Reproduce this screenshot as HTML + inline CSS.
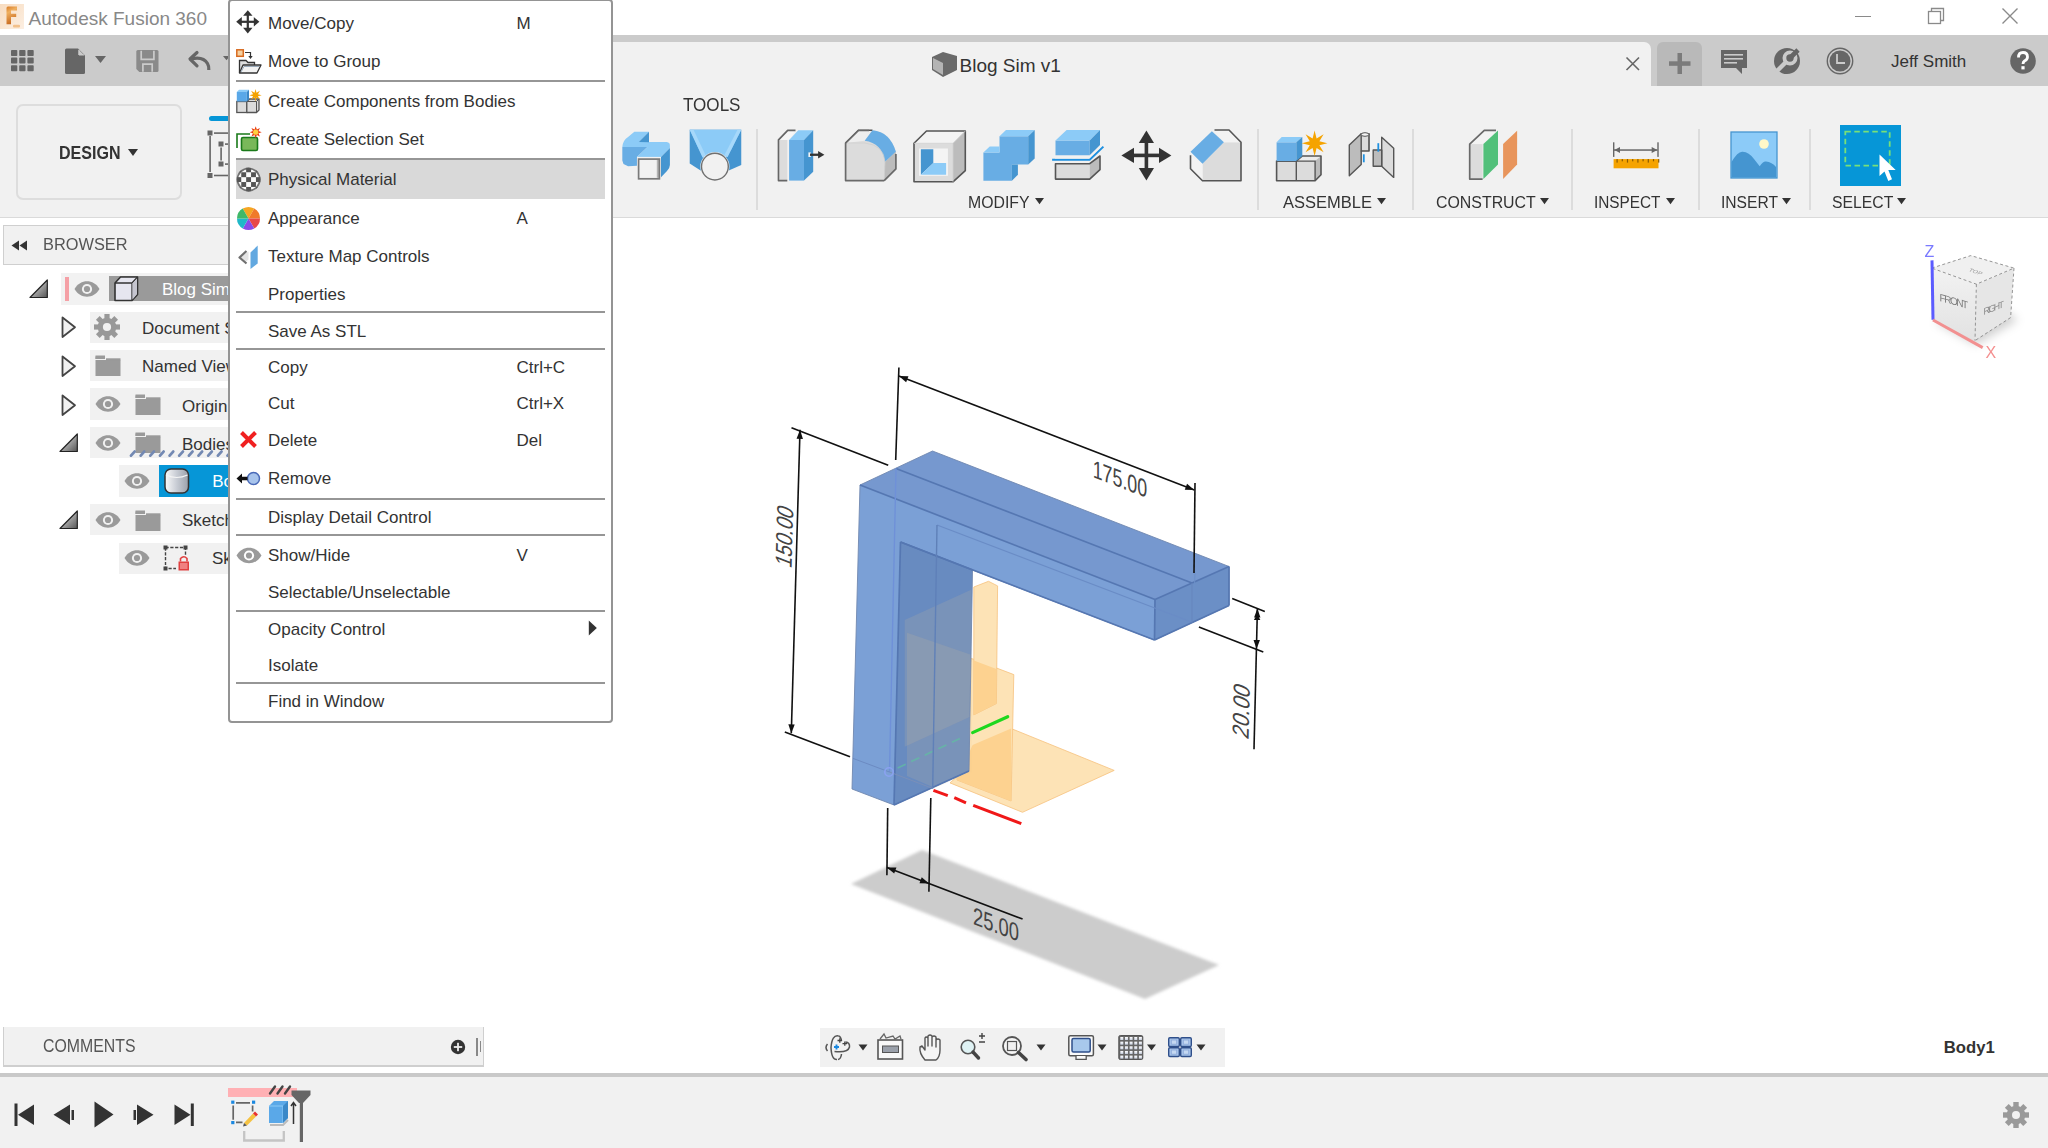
<!DOCTYPE html>
<html><head><meta charset="utf-8"><title>Autodesk Fusion 360</title>
<style>
html,body{margin:0;padding:0;width:2048px;height:1148px;overflow:hidden;background:#fff;position:relative}
body{font-family:"Liberation Sans",sans-serif}
.t{position:absolute;white-space:pre;line-height:1;font-family:"Liberation Sans",sans-serif}
svg{overflow:visible}
</style></head><body>
<div style="position:absolute;left:0px;top:35px;width:2048px;height:51px;background:#cbcbcb"></div>
<div style="position:absolute;left:0px;top:86px;width:2048px;height:131px;background:#f1f1f1"></div>
<div style="position:absolute;left:0px;top:216.5px;width:2048px;height:1.5px;background:#dadada"></div>
<svg style="position:absolute;left:0px;top:4px;" width="25" height="26" viewBox="0 0 25 26"><defs><linearGradient id="lg" x1="0" y1="0" x2="1" y2="1"><stop offset="0" stop-color="#f8dcc0"/><stop offset="1" stop-color="#fcefe2"/></linearGradient><linearGradient id="lf" x1="0" y1="0" x2="0.3" y2="1"><stop offset="0" stop-color="#d77a24"/><stop offset="0.35" stop-color="#f0b060"/><stop offset="1" stop-color="#c86a20"/></linearGradient><filter id="fb"><feGaussianBlur stdDeviation="0.5"/></filter></defs><rect x="0" y="0" width="24" height="25" fill="url(#lg)"/><g filter="url(#fb)"><path d="M6.5 4 Q6.5 2.5 8 2.5 H17 V6.5 H11 V9.8 H16.2 V13 H11 V20.3 H6.5 Z" fill="url(#lf)"/><rect x="13" y="20.8" width="7" height="2.8" rx="1" fill="#f2c08a"/></g></svg>
<div class="t" style="left:28.5px;top:8.92px;font-size:19px;color:#888;font-weight:400;">Autodesk Fusion 360</div>
<div style="position:absolute;left:1855px;top:15.5px;width:16px;height:1.5px;background:#8a8a8a"></div>
<svg style="position:absolute;left:1926px;top:6px;" width="20" height="20" viewBox="0 0 20 20"><rect x="2.5" y="5.5" width="12" height="12" fill="none" stroke="#8a8a8a" stroke-width="1.3"/><path d="M5.5 5.5 V2.5 H17.5 V14.5 H14.5" fill="none" stroke="#8a8a8a" stroke-width="1.3"/></svg>
<svg style="position:absolute;left:2000px;top:6px;" width="20" height="20" viewBox="0 0 20 20"><path d="M2.5 2.5 L17.5 17.5 M17.5 2.5 L2.5 17.5" stroke="#8a8a8a" stroke-width="1.4"/></svg>
<svg style="position:absolute;left:11px;top:50px;" width="24" height="23" viewBox="0 0 24 23"><rect x="0.0" y="0.0" width="6.3" height="6" rx="0.8" fill="#666"/><rect x="8.2" y="0.0" width="6.3" height="6" rx="0.8" fill="#666"/><rect x="16.4" y="0.0" width="6.3" height="6" rx="0.8" fill="#666"/><rect x="0.0" y="7.6" width="6.3" height="6" rx="0.8" fill="#666"/><rect x="8.2" y="7.6" width="6.3" height="6" rx="0.8" fill="#666"/><rect x="16.4" y="7.6" width="6.3" height="6" rx="0.8" fill="#666"/><rect x="0.0" y="15.2" width="6.3" height="6" rx="0.8" fill="#666"/><rect x="8.2" y="15.2" width="6.3" height="6" rx="0.8" fill="#666"/><rect x="16.4" y="15.2" width="6.3" height="6" rx="0.8" fill="#666"/></svg>
<svg style="position:absolute;left:64px;top:48px;" width="22" height="27" viewBox="0 0 22 27"><path d="M1 2 Q1 0.5 2.5 0.5 H14 L21 7.5 V24.5 Q21 26 19.5 26 H2.5 Q1 26 1 24.5 Z" fill="#666"/><path d="M14.5 1.5 L20 7 H14.5 Z" fill="#cbcbcb"/><path d="M15 2 V7 H20" fill="none" stroke="#cbcbcb" stroke-width="1"/></svg>
<svg style="position:absolute;left:95px;top:56px;" width="12" height="8" viewBox="0 0 12 8"><path d="M0 0 H11 L5.5 7 Z" fill="#666"/></svg>
<svg style="position:absolute;left:222.5px;top:56px;" width="8" height="5" viewBox="0 0 8 5"><path d="M0 0 H7 L3.5 4.2 Z" fill="#666"/></svg>
<svg style="position:absolute;left:136px;top:50px;" width="24" height="23" viewBox="0 0 24 23"><path d="M0.3 1.5 Q0.3 0 1.8 0 H21 Q22.5 0 22.5 1.5 V20.5 Q22.5 22 21 22 H3.3 L0.3 19 Z" fill="#8a8a8a"/><path d="M5.2 0.8 V9.3 H17.9 V0.8" fill="none" stroke="#cbcbcb" stroke-width="1.7"/><path d="M6.9 21.8 V14.2 H16.2 V21.8" fill="none" stroke="#cbcbcb" stroke-width="1.7"/></svg>
<svg style="position:absolute;left:186px;top:50px;" width="26" height="24" viewBox="0 0 26 24"><path d="M5 9 Q17 6 21.5 13.5 Q23 16 22.8 20" fill="none" stroke="#666" stroke-width="3.2" stroke-linecap="butt"/><path d="M11 2.5 L4 9 L11 15.8" fill="none" stroke="#666" stroke-width="3.2" stroke-linecap="round" stroke-linejoin="round"/></svg>
<div style="position:absolute;left:560px;top:42px;width:1091px;height:44px;background:#f1f1f1;border-top-right-radius:7px"></div>
<svg style="position:absolute;left:931px;top:51px;" width="28" height="27" viewBox="0 0 28 27"><path d="M1 6 L12 1 L26 5 L26 19 L12 26 L1 19 Z" fill="#6a6a6a"/><path d="M2 7 L12 12 L12 24 L2 18 Z" fill="#b4b4b4"/></svg>
<div class="t" style="left:959.5px;top:55.82px;font-size:19px;color:#333;font-weight:400;">Blog Sim v1</div>
<svg style="position:absolute;left:1625px;top:56px;" width="16" height="16" viewBox="0 0 16 16"><path d="M1.5 1.5 L14 14 M14 1.5 L1.5 14" stroke="#666" stroke-width="1.6"/></svg>
<div style="position:absolute;left:1657px;top:42px;width:45px;height:44px;background:#b9b9b9;border-top-left-radius:6px;border-top-right-radius:6px"></div>
<svg style="position:absolute;left:1669px;top:53px;" width="22" height="21" viewBox="0 0 22 21"><rect x="8.5" y="0" width="4.5" height="21" fill="#7b7b7b"/><rect x="0" y="8.3" width="21.5" height="4.5" fill="#7b7b7b"/></svg>
<svg style="position:absolute;left:1720px;top:49px;" width="28" height="26" viewBox="0 0 28 26"><path d="M1 1 H27 V19 H22 L22 25 L16 19 H1 Z" fill="#666"/><rect x="4" y="5" width="19" height="1.6" fill="#cbcbcb"/><rect x="4" y="9" width="19" height="1.6" fill="#cbcbcb"/><rect x="4" y="13" width="13" height="1.6" fill="#cbcbcb"/></svg>
<svg style="position:absolute;left:1773px;top:47px;" width="28" height="28" viewBox="0 0 28 28"><circle cx="14" cy="14" r="13" fill="#666"/><path d="M4.5 23.5 L12.5 15.5" stroke="#cbcbcb" stroke-width="4.4" stroke-linecap="round"/><circle cx="17" cy="11" r="5.6" fill="none" stroke="#cbcbcb" stroke-width="3.8"/><path d="M17.5 10.5 L25 3" stroke="#666" stroke-width="4.6"/></svg>
<svg style="position:absolute;left:1826px;top:47px;" width="28" height="28" viewBox="0 0 28 28"><circle cx="14" cy="14" r="12.7" fill="none" stroke="#666" stroke-width="1.4"/><circle cx="14" cy="14" r="10.5" fill="#666"/><path d="M11 7 V16 H19" fill="none" stroke="#cbcbcb" stroke-width="1.8"/></svg>
<div class="t" style="left:1891px;top:52.71px;font-size:17px;color:#333;font-weight:400;">Jeff Smith</div>
<svg style="position:absolute;left:2009px;top:47px;" width="28" height="28" viewBox="0 0 28 28"><circle cx="14" cy="14" r="12.8" fill="#666"/><path d="M9.5 10.5 Q9.5 5.5 14 5.5 Q18.5 5.5 18.5 10 Q18.5 12.5 15.5 14 Q14 15 14 17" fill="none" stroke="#fff" stroke-width="2.8"/><rect x="12.4" y="19.2" width="3.2" height="3.2" fill="#fff"/></svg>
<div style="position:absolute;left:16px;top:104px;width:166px;height:96px;box-sizing:border-box;border:2px solid #dddddd;border-radius:7px"></div>
<div class="t" style="left:59px;top:144.59px;font-size:17.5px;color:#333;font-weight:700;transform:scaleX(0.9164);transform-origin:0 0;">DESIGN</div>
<svg style="position:absolute;left:128px;top:149px;" width="11" height="8" viewBox="0 0 11 8"><path d="M0 0 H10 L5 7 Z" fill="#333"/></svg>
<div style="position:absolute;left:209px;top:116px;width:20px;height:5.3px;background:#0696d7;border-radius:2.5px 0 0 2.5px"></div>
<svg style="position:absolute;left:207px;top:130px;" width="22" height="48" viewBox="0 0 22 48"><rect x="0.5" y="0.5" width="5" height="5" fill="#666"/><rect x="0.5" y="43" width="5" height="5" fill="#666"/><rect x="2.3" y="6" width="1.6" height="36" fill="#666"/><rect x="7" y="2.3" width="15" height="1.6" fill="#666"/><rect x="7" y="44.7" width="15" height="1.6" fill="#666"/><rect x="11.5" y="11.5" width="5" height="5" fill="#666"/><rect x="11.5" y="31.5" width="5" height="5" fill="#666"/><rect x="13.3" y="17.5" width="1.6" height="13" fill="#666"/><rect x="18" y="13.3" width="4" height="1.6" fill="#666"/><rect x="18" y="33.3" width="4" height="1.6" fill="#666"/></svg>
<svg style="position:absolute;left:621px;top:130px;" width="52" height="52" viewBox="0 0 52 52"><polygon points="1.32,16.95 26.4,16.95 15.96,26.9 15.96,35.8 7.07,36.3 2.5,34 1.32,30.5" fill="#68ade4" /><path d="M1.32 16.95 Q2 10 7.07 7.02 L13.34 1.8 H27.98 L17.78 12 H27.98 H45.75 Q48.9 12.5 48.9 15.4 V18 L40 26.9 H15.96 L26.4 16.95 Z" fill="#8ccbf7"/><polygon points="17.78,12 27.98,1.8 27.98,12.25" fill="#4595d0" /><path d="M40 26.9 L48.9 18 V35 Q48.9 38 46 41 L40 47.3 Z" fill="#4595d0"/><rect x="16" y="26.9" width="24" height="22.5" fill="#f2f2f2"/><rect x="35.8" y="29.8" width="2.6" height="18" fill="#b4b4b4"/><rect x="17.6" y="29.1" width="20.8" height="19.7" fill="none" stroke="#7a7a7a" stroke-width="1.7"/></svg>
<svg style="position:absolute;left:689px;top:129px;" width="54" height="54" viewBox="0 0 54 54"><polygon points="0.7,0.8 52.25,0.8 52.25,36 39.75,41.5 11.6,41.5 0.7,34.4" fill="#4595d0" /><polygon points="0.7,0.8 52.25,0.8 38.5,28 13.7,28.5" fill="#8ccbf7" /><polygon points="0.7,0.8 4.5,0.8 16.5,26 13.7,28.5" fill="#a6d8fa" /><polygon points="52.25,0.8 48.5,0.8 35.5,26 38.5,28" fill="#a6d8fa" /><circle cx="25.9" cy="37.6" r="14.6" fill="#f4f4f4" opacity="0.9"/><circle cx="25.9" cy="37.6" r="13.4" fill="#f1f1f1" stroke="#707070" stroke-width="1.4"/></svg>
<div style="position:absolute;left:756px;top:129px;width:2px;height:81px;background:#dcdcdc"></div>
<svg style="position:absolute;left:777px;top:129px;" width="54" height="54" viewBox="0 0 54 54"><rect x="2.5" y="10.9" width="7.8" height="40.3" fill="#dcdcdc"/><polygon points="2,10.9 10.7,1.8 18.5,1.8 12.1,10.9" fill="#f6f6f6" /><path d="M10.3 51.6 H1.5 V10.9 L10.7 1.3 H18.5" fill="none" stroke="#666" stroke-width="1.7" stroke-linejoin="round"/><polygon points="12.1,10.9 27,10.9 27,51.6 12.1,51.6" fill="#68ade4" /><polygon points="12.1,10.9 21.3,1.3 36.2,1.3 27,10.9" fill="#8ccbf7" /><polygon points="27,10.9 36.2,1.3 36.2,42.7 27,51.6" fill="#4595d0" /><rect x="31.4" y="23.4" width="2.4" height="4.6" fill="#f4f4f4"/><rect x="33" y="24.6" width="9.5" height="2.3" fill="#333"/><polygon points="41.1,22 47.4,25.75 41.1,29.5" fill="#333" /></svg>
<svg style="position:absolute;left:844px;top:129px;" width="54" height="54" viewBox="0 0 54 54"><path d="M1.6 14 L14.4 1.2 L28.5 1.2 Q46 3 51.9 22.7 V39.9 L40.2 51.6 H1.6 Z" fill="#dcdcdc"/><path d="M1.6 14 L14.4 1.2 L28.5 1.2 L20.7 11.8 Z" fill="#eeeeee"/><path d="M1.6 14 L14.4 1.2 L28.5 1.2" fill="none" stroke="#555" stroke-width="1.6"/><path d="M20.7 11.8 L28.5 1.2 Q46 3 51.9 22.7 L41 32.9 Q38 14 20.7 11.8 Z" fill="#68ade4"/><polygon points="41,32.9 51.9,22.7 51.9,39.9 40.2,51.6" fill="#bcbcbc" /><path d="M1.6 14 L20.7 14 Q40 16 41 32.9 L40.2 51.6" fill="none" stroke="#cfcfcf" stroke-width="0.8"/><path d="M40.2 51.6 H1.6 V14 L14.4 1.5 H25 M51.9 25 V39.9 L40.2 51.6" fill="none" stroke="#6a6a6a" stroke-width="1.7" stroke-linejoin="round"/></svg>
<svg style="position:absolute;left:913px;top:129.5px;" width="54" height="54" viewBox="0 0 54 54"><polygon points="1,13.3 40,13.3 40,51.8 1,51.8" fill="#dcdcdc" /><polygon points="1,13.3 13.5,1 52.3,1 40,13.3" fill="#f3f3f3" /><polygon points="40,13.3 52.3,1 52.3,40.7 40,51.8" fill="#bcbcbc" /><rect x="6.1" y="18.5" width="28.8" height="27.3" fill="#f4f4f4"/><polygon points="7.85,19.2 20.3,19.2 20.3,32.9 7.85,44.8" fill="#4595d0" /><polygon points="7.85,44.8 20.3,32.9 33.1,32.9 33.1,44.8" fill="#8ccbf7" /><polygon points="1,13.3 13.5,1 52.3,1 52.3,40.7 40,51.8 1,51.8" fill="none" stroke="#555" stroke-width="1.6" stroke-linejoin="round" /><path d="M1 13.3 H40 V51.8 M40 13.3 L52.3 1" fill="none" stroke="#cfcfcf" stroke-width="0.8"/></svg>
<svg style="position:absolute;left:982px;top:129px;" width="54" height="54" viewBox="0 0 54 54"><polygon points="1.4,23.6 17.5,23.6 17.5,7.36 46.2,7.36 46.2,35.6 29.9,35.6 29.9,51.8 1.4,51.8" fill="#68ade4" /><polygon points="17.5,7.36 24,1.04 52.7,1.04 46.2,7.36" fill="#8ccbf7" /><polygon points="1.4,23.6 7.7,17.6 17.5,17.6 17.5,23.6" fill="#8ccbf7" /><polygon points="46.2,7.36 52.7,1.04 52.7,29.6 46.2,35.6" fill="#4595d0" /><polygon points="29.9,35.6 35.9,35.6 35.9,45.8 29.9,51.8" fill="#4595d0" /></svg>
<svg style="position:absolute;left:1051px;top:129px;" width="54" height="54" viewBox="0 0 54 54"><polygon points="4.5,34.7 38.7,34.7 38.7,50.1 4.5,50.1" fill="#dcdcdc" /><polygon points="38.7,34.7 49,27 49,40.7 38.7,50.1" fill="#bcbcbc" /><polygon points="4.5,34.7 38.7,34.7 49,27 49,40.7 38.7,50.1 4.5,50.1" fill="none" stroke="#555" stroke-width="1.6" stroke-linejoin="round" /><polygon points="4.5,11.6 38.7,11.6 38.7,26.2 4.5,26.2" fill="#68ade4" /><polygon points="4.5,11.6 15.6,1.04 49,1.04 38.7,11.6" fill="#8ccbf7" /><polygon points="38.7,11.6 49,1.04 49,15.9 38.7,26.2" fill="#4595d0" /><path d="M1.1 30.8 H38.7 L52.4 17.6" fill="none" stroke="#1e90e0" stroke-width="2"/><path d="M4 29 H38 L50 17" fill="none" stroke="#f1f1f1" stroke-width="1.2"/></svg>
<svg style="position:absolute;left:1121px;top:130px;" width="52" height="52" viewBox="0 0 52 52"><rect x="23.6" y="10" width="3.6" height="31" fill="#333"/><rect x="10" y="23.6" width="31" height="3.6" fill="#333"/><polygon points="25.4,0.4 33,13 17.8,13" fill="#333" /><polygon points="25.4,50.4 33,38 17.8,38" fill="#333" /><polygon points="0.4,25.4 13,17.8 13,33" fill="#333" /><polygon points="50.4,25.4 38,17.8 38,33" fill="#333" /></svg>
<svg style="position:absolute;left:1189px;top:129px;" width="54" height="54" viewBox="0 0 54 54"><polygon points="13.5,34.7 34.9,13.3 52,13.3 52,51.8 13.5,51.8" fill="#dcdcdc" /><polygon points="1.5,26.2 13.5,34.7 13.5,51.8 1.5,39.8" fill="#f3f3f3" /><polygon points="34.9,13.3 25.5,1 40,1 52,13.3" fill="#f3f3f3" /><polygon points="1.5,22.7 22.9,2.2 34.9,13.3 13.5,34.7" fill="#68ade4" /><path d="M25.5 1 H40 L52 13.3 V51.8 H13.5 L1.5 39.8 V26.2" fill="none" stroke="#555" stroke-width="1.6" stroke-linejoin="round"/></svg>
<div style="position:absolute;left:1256.5px;top:129px;width:2px;height:81px;background:#dcdcdc"></div>
<svg style="position:absolute;left:1276px;top:129px;" width="54" height="54" viewBox="0 0 54 54"><polygon points="0.6,32.1 39.1,32.1 39.1,51.8 0.6,51.8" fill="#dcdcdc" /><polygon points="20.3,32.1 26.3,27 45,27 39.1,32.1" fill="#ececec" /><polygon points="39.1,32.1 45,27 45,45.8 39.1,51.8" fill="#bcbcbc" /><polygon points="0.6,32.1 20.3,32.1 26.3,27 45,27 45,45.8 39.1,51.8 0.6,51.8" fill="none" stroke="#555" stroke-width="1.6" stroke-linejoin="round" /><path d="M20.3 32.1 V51.8 M20.3 32.1 H39.1 V51.8" fill="none" stroke="#555" stroke-width="1.4"/><polygon points="0.6,13.3 20.3,13.3 20.3,32.1 0.6,32.1" fill="#68ade4" /><polygon points="0.6,13.3 5.7,7.9 26.3,7.9 20.3,13.3" fill="#8ccbf7" /><polygon points="20.3,13.3 26.3,7.9 26.3,27 20.3,32.1" fill="#4595d0" /><polygon points="38.6,1.5 40.59,9.5 47.65,5.25 43.4,12.31 51.4,14.3 43.4,16.29 47.65,23.35 40.59,19.1 38.6,27.1 36.61,19.1 29.55,23.35 33.8,16.29 25.8,14.3 33.8,12.31 29.55,5.25 36.61,9.5" fill="#f5a300" /></svg>
<svg style="position:absolute;left:1348px;top:129px;" width="50" height="52" viewBox="0 0 50 52"><polygon points="1.3,15.9 13.2,4.8 20.9,4.8 20.9,21.9 13.2,21.9 13.2,35.6 1.3,46.7" fill="#bcbcbc" stroke="#555" stroke-width="1.4" stroke-linejoin="round" /><polygon points="13.2,4.8 20.9,4.8 20.9,21.9 13.2,21.9" fill="#dcdcdc" stroke="#555" stroke-width="1.4" stroke-linejoin="round" /><ellipse cx="17" cy="5.5" rx="3.8" ry="1.8" fill="#f4f4f4" stroke="#555" stroke-width="1"/><polygon points="33.7,8.2 45.7,19.3 45.7,48.4 33.7,37.3" fill="#dcdcdc" stroke="#555" stroke-width="1.4" stroke-linejoin="round" /><polygon points="25.2,21 33.7,21 33.7,37.3 25.2,37.3" fill="#bcbcbc" stroke="#555" stroke-width="1.4" stroke-linejoin="round" /><rect x="14.9" y="25.3" width="1.8" height="8" fill="#1e90e0"/><rect x="29.4" y="14.2" width="1.8" height="8.5" fill="#1e90e0"/></svg>
<div style="position:absolute;left:1412px;top:129px;width:2px;height:81px;background:#dcdcdc"></div>
<svg style="position:absolute;left:1468px;top:129px;" width="52" height="52" viewBox="0 0 52 52"><polygon points="1.7,15.1 14.6,15.1 14.6,50.1 1.7,50.1" fill="#dcdcdc" /><polygon points="1.7,15.1 16.3,1.4 29.1,1.4 14.6,15.1" fill="#f3f3f3" /><path d="M14.6 50.1 H1.7 V15.1 L16.3 1.4 H28" fill="none" stroke="#6a6a6a" stroke-width="1.7" stroke-linejoin="round"/><polygon points="15.4,15.1 30,1.4 30,35.6 15.4,50.1" fill="#52c07a" /><polygon points="35.1,15.1 49.1,1.8 49.1,35.6 35.1,50.1" fill="#e8955c" /></svg>
<div style="position:absolute;left:1571px;top:129px;width:2px;height:81px;background:#dcdcdc"></div>
<svg style="position:absolute;left:1612px;top:141px;" width="50" height="30" viewBox="0 0 50 30"><rect x="1" y="1.3" width="1.4" height="14.6" fill="#666"/><rect x="45.3" y="1.3" width="1.4" height="14.6" fill="#666"/><rect x="2" y="8.3" width="43.5" height="1.5" fill="#666"/><polygon points="2.4,9 8,6 8,12" fill="#666" /><polygon points="45.3,9 39.7,6 39.7,12" fill="#666" /><rect x="1.6" y="18.1" width="44.9" height="9.2" fill="#f5a300"/><rect x="4.5" y="18.1" width="1.2" height="3.5" fill="#8a5a00"/><rect x="9.7" y="18.1" width="1.2" height="2.2" fill="#8a5a00"/><rect x="14.9" y="18.1" width="1.2" height="3.5" fill="#8a5a00"/><rect x="20.1" y="18.1" width="1.2" height="2.2" fill="#8a5a00"/><rect x="25.3" y="18.1" width="1.2" height="3.5" fill="#8a5a00"/><rect x="30.5" y="18.1" width="1.2" height="2.2" fill="#8a5a00"/><rect x="35.7" y="18.1" width="1.2" height="3.5" fill="#8a5a00"/><rect x="40.9" y="18.1" width="1.2" height="2.2" fill="#8a5a00"/><rect x="46.1" y="18.1" width="1.2" height="3.5" fill="#8a5a00"/></svg>
<svg style="position:absolute;left:1730px;top:131px;" width="48" height="48" viewBox="0 0 48 48"><rect x="1" y="1" width="46" height="46" fill="#8ccbf8" stroke="#4595d0" stroke-width="1.3"/><path d="M1.5 31 Q8 20 12.6 20.7 Q19 21 24 28 L29.7 35.3 Q33 30 36 30.5 Q42 31 46 36.1 V46.4 H1.5 Z" fill="#4595d0"/><circle cx="34" cy="13" r="4.8" fill="#fff8c8"/></svg>
<div style="position:absolute;left:1698px;top:129px;width:2px;height:81px;background:#dcdcdc"></div>
<div style="position:absolute;left:1808.5px;top:129px;width:2px;height:81px;background:#dcdcdc"></div>
<svg style="position:absolute;left:1839.5px;top:125px;" width="61" height="61" viewBox="0 0 61 61"><rect x="0" y="0" width="61" height="61" fill="#0696d7"/><rect x="5.3" y="6.7" width="44.4" height="33.9" fill="none" stroke="#78e078" stroke-width="1.8" stroke-dasharray="5.5 3.5"/><polygon points="39.5,29.5 39.5,51 44.5,46.5 48.3,56 52,54.3 48.3,45 55.7,45" fill="#fff" /></svg>
<div class="t" style="left:682.5px;top:96.36px;font-size:18px;color:#333;font-weight:400;transform:scaleX(0.9472);transform-origin:0 0;">TOOLS</div>
<div class="t" style="left:967.5px;top:195.39px;font-size:16.9px;color:#333;font-weight:400;transform:scaleX(0.9363);transform-origin:0 0;">MODIFY</div>
<svg style="position:absolute;left:1035px;top:198.2px;" width="10" height="7.3" viewBox="0 0 10 7.3"><path d="M0 0 H9 L4.5 6.3 Z" fill="#333"/></svg>
<div class="t" style="left:1283px;top:195.39px;font-size:16.9px;color:#333;font-weight:400;transform:scaleX(0.9774);transform-origin:0 0;">ASSEMBLE</div>
<svg style="position:absolute;left:1376.6px;top:198.2px;" width="10" height="7.3" viewBox="0 0 10 7.3"><path d="M0 0 H9 L4.5 6.3 Z" fill="#333"/></svg>
<div class="t" style="left:1435.5px;top:195.39px;font-size:16.9px;color:#333;font-weight:400;transform:scaleX(0.9412);transform-origin:0 0;">CONSTRUCT</div>
<svg style="position:absolute;left:1540.4px;top:198.2px;" width="10" height="7.3" viewBox="0 0 10 7.3"><path d="M0 0 H9 L4.5 6.3 Z" fill="#333"/></svg>
<div class="t" style="left:1594px;top:195.39px;font-size:16.9px;color:#333;font-weight:400;transform:scaleX(0.9082);transform-origin:0 0;">INSPECT</div>
<svg style="position:absolute;left:1665.7px;top:198.2px;" width="10" height="7.3" viewBox="0 0 10 7.3"><path d="M0 0 H9 L4.5 6.3 Z" fill="#333"/></svg>
<div class="t" style="left:1720.5px;top:195.39px;font-size:16.9px;color:#333;font-weight:400;transform:scaleX(0.9247);transform-origin:0 0;">INSERT</div>
<svg style="position:absolute;left:1782px;top:198.2px;" width="10" height="7.3" viewBox="0 0 10 7.3"><path d="M0 0 H9 L4.5 6.3 Z" fill="#333"/></svg>
<div class="t" style="left:1831.5px;top:195.39px;font-size:16.9px;color:#333;font-weight:400;transform:scaleX(0.9328);transform-origin:0 0;">SELECT</div>
<svg style="position:absolute;left:1897.3px;top:198.2px;" width="10" height="7.3" viewBox="0 0 10 7.3"><path d="M0 0 H9 L4.5 6.3 Z" fill="#333"/></svg>
<div style="position:absolute;left:3px;top:225px;width:226px;height:40px;box-sizing:border-box;background:#f1f1f1;border:1.5px solid #cfcfcf;border-right:none"></div>
<svg style="position:absolute;left:11px;top:240px;" width="18" height="12" viewBox="0 0 18 12"><path d="M0.5 5.5 L8 0.5 V10.5 Z" fill="#333"/><path d="M8.5 5.5 L16 0.5 V10.5 Z" fill="#333"/></svg>
<div class="t" style="left:42.5px;top:236.07px;font-size:17.4px;color:#555;font-weight:400;transform:scaleX(0.9404);transform-origin:0 0;">BROWSER</div>
<div style="position:absolute;left:61px;top:273px;width:168px;height:31.5px;background:#f2f2f2"></div>
<div style="position:absolute;left:64.5px;top:276.5px;width:4.3px;height:24.5px;background:#f5a0a6"></div>
<svg style="position:absolute;left:74px;top:281px;" width="26" height="16" viewBox="0 0 26 16"><path d="M0.5 8 C6.5 -2.3 19.5 -2.3 25.5 8 C19.5 18.3 6.5 18.3 0.5 8 Z" fill="#9a9a9a"/><circle cx="13" cy="8" r="5.1" fill="#f1f1f1"/><circle cx="13" cy="8" r="3.1" fill="#9a9a9a"/></svg>
<div style="position:absolute;left:109px;top:276px;width:120px;height:25px;background:#9a9a9a"></div>
<svg style="position:absolute;left:113px;top:275px;" width="27" height="27" viewBox="0 0 27 27"><path d="M2 8 L7.5 2 H24.5 V19.5 L19 25.5 H2 Z" fill="#e6e6ef" stroke="#333" stroke-width="1.6" stroke-linejoin="round"/><path d="M2 8 H19 V25.5 M19 8 L24.5 2" fill="none" stroke="#333" stroke-width="1.3"/><path d="M19.5 8.5 L24 3.5 V19 L19.5 24.5 Z" fill="#c5c5cf"/></svg>
<div class="t" style="left:162px;top:281.21px;font-size:17px;color:#fff;font-weight:400;">Blog Sim</div>
<svg style="position:absolute;left:29px;top:279px;" width="20" height="20" viewBox="0 0 20 20"><defs><linearGradient id="tg" x1="0" y1="0" x2="1" y2="1"><stop offset="0" stop-color="#f4f4f4"/><stop offset="1" stop-color="#555"/></linearGradient></defs><path d="M1 18.5 L18.3 1 V18.5 Z" fill="url(#tg)" stroke="#222" stroke-width="1.2" stroke-linejoin="round"/></svg>
<div style="position:absolute;left:89.7px;top:311.5px;width:140px;height:31.5px;background:#f1f1f1"></div>
<svg style="position:absolute;left:60.5px;top:316.3px;" width="16" height="23" viewBox="0 0 16 23"><path d="M1.5 1.5 L14 11.3 L1.5 21 Z" fill="#f1f1f1" stroke="#444" stroke-width="1.8" stroke-linejoin="round"/></svg>
<svg style="position:absolute;left:94px;top:314px;" width="26" height="26" viewBox="0 0 26 26"><g transform="translate(13,13)"><rect x="-2.6" y="-13" width="5.2" height="6" fill="#999" transform="rotate(0)"/><rect x="-2.6" y="-13" width="5.2" height="6" fill="#999" transform="rotate(45)"/><rect x="-2.6" y="-13" width="5.2" height="6" fill="#999" transform="rotate(90)"/><rect x="-2.6" y="-13" width="5.2" height="6" fill="#999" transform="rotate(135)"/><rect x="-2.6" y="-13" width="5.2" height="6" fill="#999" transform="rotate(180)"/><rect x="-2.6" y="-13" width="5.2" height="6" fill="#999" transform="rotate(225)"/><rect x="-2.6" y="-13" width="5.2" height="6" fill="#999" transform="rotate(270)"/><rect x="-2.6" y="-13" width="5.2" height="6" fill="#999" transform="rotate(315)"/><circle r="9.3" fill="#999"/><circle r="4.1" fill="#f1f1f1"/></g></svg>
<div class="t" style="left:142px;top:320.01px;font-size:17px;color:#333;font-weight:400;">Document Settings</div>
<div style="position:absolute;left:89.7px;top:349.8px;width:140px;height:31.5px;background:#f1f1f1"></div>
<svg style="position:absolute;left:60.5px;top:354.6px;" width="16" height="23" viewBox="0 0 16 23"><path d="M1.5 1.5 L14 11.3 L1.5 21 Z" fill="#f1f1f1" stroke="#444" stroke-width="1.8" stroke-linejoin="round"/></svg>
<svg style="position:absolute;left:94.5px;top:355px;" width="26" height="22" viewBox="0 0 26 22"><path d="M0.5 4 H10 L10 0.5 H0.5 Z" fill="#9a9a9a"/><rect x="0.5" y="1.5" width="9.5" height="2.5" fill="#9a9a9a"/><rect x="0.5" y="5" width="25" height="16" fill="#9a9a9a"/><rect x="11" y="3.3" width="14.5" height="2" fill="#9a9a9a"/></svg>
<div class="t" style="left:142px;top:357.81px;font-size:17px;color:#333;font-weight:400;">Named Views</div>
<div style="position:absolute;left:89.7px;top:388.4px;width:140px;height:31.3px;background:#f1f1f1"></div>
<svg style="position:absolute;left:60.5px;top:393.6px;" width="16" height="23" viewBox="0 0 16 23"><path d="M1.5 1.5 L14 11.3 L1.5 21 Z" fill="#f1f1f1" stroke="#444" stroke-width="1.8" stroke-linejoin="round"/></svg>
<svg style="position:absolute;left:95px;top:396.4px;" width="26" height="16" viewBox="0 0 26 16"><path d="M0.5 8 C6.5 -2.3 19.5 -2.3 25.5 8 C19.5 18.3 6.5 18.3 0.5 8 Z" fill="#9a9a9a"/><circle cx="13" cy="8" r="5.1" fill="#f1f1f1"/><circle cx="13" cy="8" r="3.1" fill="#9a9a9a"/></svg>
<svg style="position:absolute;left:135px;top:394px;" width="26" height="22" viewBox="0 0 26 22"><path d="M0.5 4 H10 L10 0.5 H0.5 Z" fill="#9a9a9a"/><rect x="0.5" y="1.5" width="9.5" height="2.5" fill="#9a9a9a"/><rect x="0.5" y="5" width="25" height="16" fill="#9a9a9a"/><rect x="11" y="3.3" width="14.5" height="2" fill="#9a9a9a"/></svg>
<div class="t" style="left:182px;top:397.61px;font-size:17px;color:#333;font-weight:400;">Origin</div>
<div style="position:absolute;left:89.7px;top:426.7px;width:140px;height:31.7px;background:#f1f1f1"></div>
<svg style="position:absolute;left:58.5px;top:433px;" width="20" height="20" viewBox="0 0 20 20"><defs><linearGradient id="tg" x1="0" y1="0" x2="1" y2="1"><stop offset="0" stop-color="#f4f4f4"/><stop offset="1" stop-color="#555"/></linearGradient></defs><path d="M1 18.5 L18.3 1 V18.5 Z" fill="url(#tg)" stroke="#222" stroke-width="1.2" stroke-linejoin="round"/></svg>
<svg style="position:absolute;left:95px;top:434.8px;" width="26" height="16" viewBox="0 0 26 16"><path d="M0.5 8 C6.5 -2.3 19.5 -2.3 25.5 8 C19.5 18.3 6.5 18.3 0.5 8 Z" fill="#9a9a9a"/><circle cx="13" cy="8" r="5.1" fill="#f1f1f1"/><circle cx="13" cy="8" r="3.1" fill="#9a9a9a"/></svg>
<svg style="position:absolute;left:135px;top:432.3px;" width="26" height="22" viewBox="0 0 26 22"><path d="M0.5 4 H10 L10 0.5 H0.5 Z" fill="#9a9a9a"/><rect x="0.5" y="1.5" width="9.5" height="2.5" fill="#9a9a9a"/><rect x="0.5" y="5" width="25" height="16" fill="#9a9a9a"/><rect x="11" y="3.3" width="14.5" height="2" fill="#9a9a9a"/></svg>
<div class="t" style="left:182px;top:436.01px;font-size:17px;color:#333;font-weight:400;">Bodies</div>
<svg style="position:absolute;left:129px;top:449px;" width="100" height="9" viewBox="0 0 100 9"><line x1="2.0" y1="6.6" x2="5.6" y2="2.6" stroke="#7389b3" stroke-width="2.8" stroke-linecap="round"/><line x1="11.7" y1="6.6" x2="15.2" y2="2.6" stroke="#7389b3" stroke-width="2.8" stroke-linecap="round"/><line x1="21.3" y1="6.6" x2="24.9" y2="2.6" stroke="#7389b3" stroke-width="2.8" stroke-linecap="round"/><line x1="31.0" y1="6.6" x2="34.6" y2="2.6" stroke="#7389b3" stroke-width="2.8" stroke-linecap="round"/><line x1="40.6" y1="6.6" x2="44.2" y2="2.6" stroke="#7389b3" stroke-width="2.8" stroke-linecap="round"/><line x1="50.2" y1="6.6" x2="53.9" y2="2.6" stroke="#7389b3" stroke-width="2.8" stroke-linecap="round"/><line x1="59.9" y1="6.6" x2="63.5" y2="2.6" stroke="#7389b3" stroke-width="2.8" stroke-linecap="round"/><line x1="69.5" y1="6.6" x2="73.1" y2="2.6" stroke="#7389b3" stroke-width="2.8" stroke-linecap="round"/><line x1="79.2" y1="6.6" x2="82.8" y2="2.6" stroke="#7389b3" stroke-width="2.8" stroke-linecap="round"/><line x1="88.9" y1="6.6" x2="92.5" y2="2.6" stroke="#7389b3" stroke-width="2.8" stroke-linecap="round"/><line x1="98.5" y1="6.6" x2="102.1" y2="2.6" stroke="#7389b3" stroke-width="2.8" stroke-linecap="round"/></svg>
<div style="position:absolute;left:119.3px;top:465.4px;width:110px;height:31.6px;background:#f1f1f1"></div>
<svg style="position:absolute;left:123.7px;top:473px;" width="26" height="16" viewBox="0 0 26 16"><path d="M0.5 8 C6.5 -2.3 19.5 -2.3 25.5 8 C19.5 18.3 6.5 18.3 0.5 8 Z" fill="#9a9a9a"/><circle cx="13" cy="8" r="5.1" fill="#f1f1f1"/><circle cx="13" cy="8" r="3.1" fill="#9a9a9a"/></svg>
<div style="position:absolute;left:158.5px;top:465.4px;width:71px;height:31.6px;background:#0696d7"></div>
<svg style="position:absolute;left:163px;top:467px;" width="28" height="28" viewBox="0 0 28 28"><defs><linearGradient id="cg" x1="0" y1="0" x2="1" y2="0"><stop offset="0" stop-color="#fafafa"/><stop offset="0.5" stop-color="#c8ccd4"/><stop offset="1" stop-color="#9aa0aa"/></linearGradient></defs><rect x="2" y="2" width="23.5" height="24" rx="6" fill="url(#cg)" stroke="#333" stroke-width="1.5"/><path d="M3 8 Q13.7 13 24.5 8" fill="none" stroke="#f4f4f4" stroke-width="1.2"/></svg>
<div class="t" style="left:212.2px;top:472.81px;font-size:17px;color:#fff;font-weight:400;">Body1</div>
<div style="position:absolute;left:89.7px;top:504px;width:140px;height:31.4px;background:#f1f1f1"></div>
<svg style="position:absolute;left:58.5px;top:510.3px;" width="20" height="20" viewBox="0 0 20 20"><defs><linearGradient id="tg" x1="0" y1="0" x2="1" y2="1"><stop offset="0" stop-color="#f4f4f4"/><stop offset="1" stop-color="#555"/></linearGradient></defs><path d="M1 18.5 L18.3 1 V18.5 Z" fill="url(#tg)" stroke="#222" stroke-width="1.2" stroke-linejoin="round"/></svg>
<svg style="position:absolute;left:95px;top:511.6px;" width="26" height="16" viewBox="0 0 26 16"><path d="M0.5 8 C6.5 -2.3 19.5 -2.3 25.5 8 C19.5 18.3 6.5 18.3 0.5 8 Z" fill="#9a9a9a"/><circle cx="13" cy="8" r="5.1" fill="#f1f1f1"/><circle cx="13" cy="8" r="3.1" fill="#9a9a9a"/></svg>
<svg style="position:absolute;left:135px;top:509.5px;" width="26" height="22" viewBox="0 0 26 22"><path d="M0.5 4 H10 L10 0.5 H0.5 Z" fill="#9a9a9a"/><rect x="0.5" y="1.5" width="9.5" height="2.5" fill="#9a9a9a"/><rect x="0.5" y="5" width="25" height="16" fill="#9a9a9a"/><rect x="11" y="3.3" width="14.5" height="2" fill="#9a9a9a"/></svg>
<div class="t" style="left:182px;top:511.71px;font-size:17px;color:#333;font-weight:400;">Sketches</div>
<div style="position:absolute;left:119.3px;top:542.9px;width:110px;height:30.8px;background:#f1f1f1"></div>
<svg style="position:absolute;left:123.7px;top:549.7px;" width="26" height="16" viewBox="0 0 26 16"><path d="M0.5 8 C6.5 -2.3 19.5 -2.3 25.5 8 C19.5 18.3 6.5 18.3 0.5 8 Z" fill="#9a9a9a"/><circle cx="13" cy="8" r="5.1" fill="#f1f1f1"/><circle cx="13" cy="8" r="3.1" fill="#9a9a9a"/></svg>
<svg style="position:absolute;left:163px;top:545px;" width="28" height="27" viewBox="0 0 28 27"><path d="M2.5 2.5 H22.5 V11 M2.5 2.5 V23.5 H13" fill="none" stroke="#444" stroke-width="1.4" stroke-dasharray="3.2 1.6"/><rect x="0.5" y="0.5" width="4" height="4" fill="#444"/><rect x="20.5" y="0.5" width="4" height="4" fill="#444"/><rect x="0.5" y="21.5" width="4" height="4" fill="#444"/><rect x="15.5" y="16.5" width="10.5" height="9" fill="#e04040"/><rect x="17" y="18" width="7.5" height="6" fill="#f08080"/><path d="M17.5 16.5 V13.5 Q20.8 10 24 13.5 V16.5" fill="none" stroke="#e04040" stroke-width="1.6"/></svg>
<div class="t" style="left:212px;top:550.01px;font-size:17px;color:#333;font-weight:400;">Sketch1</div>
<div style="position:absolute;left:3px;top:1027px;width:481px;height:39.5px;box-sizing:border-box;background:#f1f1f1;border-left:1.5px solid #cfcfcf;border-bottom:2px solid #cfcfcf;border-right:1.5px solid #cfcfcf"></div>
<div class="t" style="left:43px;top:1038.32px;font-size:17.7px;color:#555;font-weight:400;transform:scaleX(0.8966);transform-origin:0 0;">COMMENTS</div>
<svg style="position:absolute;left:450px;top:1039px;" width="16" height="16" viewBox="0 0 16 16"><circle cx="8" cy="8" r="7.2" fill="#333"/><rect x="7.1" y="3.8" width="1.8" height="8.4" fill="#eee"/><rect x="3.8" y="7.1" width="8.4" height="1.8" fill="#eee"/></svg>
<div style="position:absolute;left:476.2px;top:1038px;width:1.6px;height:17.7px;background:#888"></div>
<div style="position:absolute;left:479.6px;top:1041px;width:1.4px;height:11px;background:#888"></div>
<div class="t" style="left:1943.7px;top:1040.46px;font-size:16.7px;color:#333;font-weight:700;">Body1</div>
<div style="position:absolute;left:0px;top:1073px;width:2048px;height:4px;background:#c9c9c9"></div>
<div style="position:absolute;left:0px;top:1077px;width:2048px;height:71px;background:#f1f1f1"></div>
<svg style="position:absolute;left:14px;top:1103px;" width="21" height="24" viewBox="0 0 21 24"><rect x="0.5" y="0.5" width="3" height="22.5" fill="#333"/><path d="M20 1.5 V22 L4 11.75 Z" fill="#333"/></svg>
<svg style="position:absolute;left:53px;top:1103px;" width="22" height="24" viewBox="0 0 22 24"><path d="M17 1.5 V22 L0.5 11.75 Z" fill="#333"/><rect x="18.5" y="7" width="2.5" height="10" fill="#333"/></svg>
<svg style="position:absolute;left:93.5px;top:1100.5px;" width="21" height="27" viewBox="0 0 21 27"><path d="M0.5 0.5 V26.5 L19.5 13.5 Z" fill="#333"/></svg>
<svg style="position:absolute;left:132.5px;top:1103px;" width="22" height="24" viewBox="0 0 22 24"><rect x="0.5" y="7" width="2.5" height="10" fill="#333"/><path d="M4 1.5 V22 L20.5 11.75 Z" fill="#333"/></svg>
<svg style="position:absolute;left:174px;top:1103px;" width="21" height="24" viewBox="0 0 21 24"><path d="M0.5 1.5 V22 L16.5 11.75 Z" fill="#333"/><rect x="16.8" y="0.5" width="3" height="22.5" fill="#333"/></svg>
<div style="position:absolute;left:228px;top:1088px;width:69px;height:9px;background:#ffb0b4"></div>
<svg style="position:absolute;left:268px;top:1085px;" width="28" height="10" viewBox="0 0 28 10"><path d="M2 8.5 L7 1.5 M9.5 8.5 L14.5 1.5 M17 8.5 L22 1.5" stroke="#444" stroke-width="2.4" stroke-linecap="round"/></svg>
<svg style="position:absolute;left:230px;top:1099px;" width="28" height="28" viewBox="0 0 28 28"><path d="M6 3.8 H20 M3.2 6.5 V20.7 M22.6 6.5 V12.4 M6 23.4 H12.5" fill="none" stroke="#666" stroke-width="1.7"/><rect x="1.2" y="1.6" width="3.2" height="3.2" fill="#1a88e0"/><rect x="22" y="1.6" width="3.2" height="3.2" fill="#1a88e0"/><rect x="1.2" y="22" width="3.2" height="3.2" fill="#1a88e0"/><path d="M14 24 L23 14.5 L26 17.5 L17 26.5 Z" fill="#f5c242"/><path d="M23 14.5 L25 12.5 L28 15.5 L26 17.5 Z" fill="#e83030"/><path d="M14 24 L13 27.5 L17 26.5 Z" fill="#555"/></svg>
<svg style="position:absolute;left:268px;top:1099px;" width="30" height="28" viewBox="0 0 30 28"><path d="M1 7 L6 2 H20 V19 L15 24 H1 Z" fill="#5aa8e8"/><path d="M1 7 H15 V24" fill="none" stroke="#8ccbf7" stroke-width="1"/><path d="M15 7 L20 2 V19 L15 24 Z" fill="#3a88c8"/><path d="M2 26 H15 L20 21" fill="none" stroke="#bbb" stroke-width="2"/><path d="M25.5 25 V4 M23 7 L25.5 3.5 L28 7" fill="none" stroke="#333" stroke-width="1.5"/></svg>
<svg style="position:absolute;left:243px;top:1131px;" width="42" height="11" viewBox="0 0 42 11"><path d="M1.2 0 V9.5 H40.8 V0" fill="none" stroke="#c4c4c4" stroke-width="2.3"/></svg>
<svg style="position:absolute;left:290px;top:1090px;" width="23" height="53" viewBox="0 0 23 53"><path d="M1.5 0.5 H20.5 V5 L13 13 H9 L1.5 5 Z" fill="#666"/><rect x="9.8" y="10" width="3.2" height="42" fill="#666"/></svg>
<svg style="position:absolute;left:2003px;top:1102px;" width="26" height="26" viewBox="0 0 26 26"><g transform="translate(13,13)"><rect x="-2.7" y="-13" width="5.4" height="6" fill="#9a9a9a" transform="rotate(0)"/><rect x="-2.7" y="-13" width="5.4" height="6" fill="#9a9a9a" transform="rotate(45)"/><rect x="-2.7" y="-13" width="5.4" height="6" fill="#9a9a9a" transform="rotate(90)"/><rect x="-2.7" y="-13" width="5.4" height="6" fill="#9a9a9a" transform="rotate(135)"/><rect x="-2.7" y="-13" width="5.4" height="6" fill="#9a9a9a" transform="rotate(180)"/><rect x="-2.7" y="-13" width="5.4" height="6" fill="#9a9a9a" transform="rotate(225)"/><rect x="-2.7" y="-13" width="5.4" height="6" fill="#9a9a9a" transform="rotate(270)"/><rect x="-2.7" y="-13" width="5.4" height="6" fill="#9a9a9a" transform="rotate(315)"/><circle r="9.3" fill="#9a9a9a"/><circle r="4" fill="#f1f1f1"/></g></svg>
<svg style="position:absolute;left:0;top:0" width="2048" height="1148" viewBox="0 0 2048 1148"><defs><filter id="bl" x="-20%" y="-20%" width="140%" height="140%"><feGaussianBlur stdDeviation="1.6"/></filter><filter id="bl2" x="-50%" y="-50%" width="200%" height="200%"><feGaussianBlur stdDeviation="4"/></filter></defs><polygon points="851,884 922,850 1219,965 1145,999" fill="#cccccc" filter="url(#bl)"/><polygon points="950,782.9 1011.1,728.5 1114.2,770.4 1022.5,812.3" fill="#fde3b6" stroke="#f6c27e" stroke-width="0.8" stroke-linejoin="round" /><polygon points="971,658.3 1013.8,674.6 1011.1,801 957,780" fill="#fde3b6" stroke="#f6c27e" stroke-width="0.8" stroke-linejoin="round" /><polygon points="973.8,587 988.5,581.3 997.6,585.9 996.4,703.6 973.8,714.9" fill="#fde3b6" stroke="#f6c27e" stroke-width="0.8" stroke-linejoin="round" /><polygon points="973.8,660.5 996.4,669 996.4,703.6 973.8,714.9" fill="#fdd290" /><polygon points="972.6,745 1011.1,728.5 1011.1,801 957,780" fill="#fdd290" /><line x1="972.6" y1="732.6" x2="1007.7" y2="716.7" stroke="#1ed81e" stroke-width="3.2" stroke-linecap="round"/><line x1="933.4" y1="790.4" x2="947.8" y2="795.6" stroke="#f01818" stroke-width="3" stroke-linecap="butt"/><line x1="954.3" y1="797.6" x2="966" y2="802.8" stroke="#f01818" stroke-width="3" stroke-linecap="butt"/><line x1="973.2" y1="805.4" x2="1021.3" y2="823.6" stroke="#f01818" stroke-width="3" stroke-linecap="butt"/><polygon points="932.5,451 860,485 1155,599.5 1229,566.5" fill="#7698cf" /><polygon points="860,485 1155,599.5 1154.5,640 900.5,542 894,805 852,789" fill="#7ba0d6" /><polygon points="1155,599.5 1229,566.5 1229,605.5 1154.5,640" fill="#6b8fc6" /><polygon points="900.5,542 972.5,570 969,771 894,805" fill="#688bc0" /><polygon points="904.7,620 971.7,589.4 971.7,716 904.7,746.8" fill="rgba(240,200,140,0.13)" /><polygon points="907,632.8 971.7,655 971.7,772 935,788 907,776" fill="rgba(240,200,140,0.13)" /><line x1="897.6" y1="768" x2="962.3" y2="737.4" stroke="#60c0a0" stroke-width="1.6" stroke-dasharray="9 6" opacity="0.7"/><polygon points="932.5,451 1229,566.5 1229,605.5 1154.5,640 972.5,570 969,771 894,805 852,789 860,485" fill="none" stroke="#7088b0" stroke-width="0.9" stroke-linejoin="round" /><line x1="860" y1="485" x2="1155" y2="599.5" stroke="#5577b2" stroke-width="1.7" /><line x1="900.5" y1="542" x2="1154.5" y2="640" stroke="#5577b2" stroke-width="1.7" /><line x1="1155" y1="599.5" x2="1154.5" y2="640" stroke="#5577b2" stroke-width="1.7" /><line x1="1155" y1="599.5" x2="1229" y2="566.5" stroke="#5577b2" stroke-width="1.7" /><line x1="894" y1="805" x2="900.5" y2="542" stroke="#5577b2" stroke-width="1.7" /><line x1="900.5" y1="542" x2="972.5" y2="570" stroke="#5577b2" stroke-width="1.7" /><line x1="894" y1="805" x2="969" y2="771" stroke="#5577b2" stroke-width="1.7" /><line x1="1229" y1="566.5" x2="1229" y2="605.5" stroke="#5577b2" stroke-width="1.7" /><line x1="1229" y1="605.5" x2="1154.5" y2="640" stroke="#5577b2" stroke-width="1.7" /><line x1="896" y1="468.5" x2="1192" y2="583" stroke="#5577b2" stroke-width="1.7" /><line x1="1192" y1="583" x2="1192" y2="622.5" stroke="#6685bd" stroke-width="1.0" /><line x1="896" y1="468.5" x2="889.5" y2="772" stroke="#6f90d8" stroke-width="1.4" /><line x1="937" y1="525" x2="1191.5" y2="622" stroke="#6a8cc6" stroke-width="1.3" /><line x1="937" y1="525" x2="932.7" y2="788.4" stroke="#5f80b8" stroke-width="1.4" /><line x1="889.5" y1="772" x2="932.7" y2="788.4" stroke="#7a8fb8" stroke-width="1.0" /><line x1="853" y1="758.4" x2="889.5" y2="772" stroke="#6a88bf" stroke-width="0.9" /><circle cx="889" cy="772" r="4.2" fill="none" stroke="#8aa2f0" stroke-width="1.6"/><line x1="898.9" y1="367.5" x2="895.7" y2="460" stroke="#111" stroke-width="1.6" /><line x1="1195" y1="483" x2="1194" y2="573" stroke="#111" stroke-width="1.6" /><line x1="1195" y1="573" x2="1194" y2="598" stroke="#6c8fc8" stroke-width="1.0" /><line x1="898.9" y1="376" x2="1194.3" y2="490" stroke="#111" stroke-width="1.6" /><polygon points="898.9,376 908.45,376.26 906.14,382.23" fill="#111" /><polygon points="1194.3,490 1184.75,489.74 1187.06,483.77" fill="#111" /><text x="0" y="0" transform="matrix(0.849,0.328,0,1.18,1092.7,476.9)" font-family="Liberation Sans" font-size="21" fill="#444">175.00</text><line x1="791.5" y1="427.7" x2="888.2" y2="465.3" stroke="#111" stroke-width="1.6" /><line x1="784.8" y1="732" x2="850" y2="756.8" stroke="#111" stroke-width="1.6" /><line x1="800" y1="429.8" x2="791.3" y2="733.3" stroke="#111" stroke-width="1.6" /><polygon points="800,429.8 802.96,438.88 796.56,438.71" fill="#111" /><polygon points="791.3,733.3 788.34,724.22 794.73,724.39" fill="#111" /><text x="0" y="0" transform="matrix(0.0267,-0.93,1.1,0.425,791.5,569)" font-family="Liberation Sans" font-size="21" fill="#444">150.00</text><line x1="1232.2" y1="598.6" x2="1264.8" y2="611.5" stroke="#111" stroke-width="1.6" /><line x1="1198.9" y1="627" x2="1263.3" y2="651.9" stroke="#111" stroke-width="1.6" /><line x1="1257.4" y1="608.5" x2="1254" y2="749.3" stroke="#111" stroke-width="1.6" /><polygon points="1257.4,608.5 1260.44,617.55 1254.04,617.44" fill="#111" /><polygon points="1256.6,649 1253.54,639.95 1259.94,640.05" fill="#111" /><polygon points="1257.2,614 1260.31,620.05 1253.91,619.95" fill="#111" /><text x="0" y="0" transform="matrix(0.024,-1.0,1.1,0.425,1248.5,740)" font-family="Liberation Sans" font-size="21" fill="#444">20.00</text><line x1="887.7" y1="808" x2="886.9" y2="875.2" stroke="#111" stroke-width="1.6" /><line x1="930.8" y1="798" x2="928.9" y2="891.8" stroke="#111" stroke-width="1.6" /><line x1="886.9" y1="867.4" x2="1022.6" y2="919.1" stroke="#111" stroke-width="1.6" /><polygon points="886.9,867.4 896.45,867.62 894.17,873.6" fill="#111" /><polygon points="929,883.5 919.45,883.26 921.75,877.28" fill="#111" /><text x="0" y="0" transform="matrix(0.877,0.338,0,1.18,973,924)" font-family="Liberation Sans" font-size="21" fill="#444">25.00</text></svg>
<svg style="position:absolute;left:0;top:0" width="2048" height="1148" viewBox="0 0 2048 1148"><defs><filter id="vsoft" x="0" y="0" width="2048" height="1148" filterUnits="userSpaceOnUse"><feGaussianBlur stdDeviation="0.75"/></filter></defs><g filter="url(#vsoft)"><defs><filter id="vb" x="-50%" y="-50%" width="200%" height="200%"><feGaussianBlur stdDeviation="5"/></filter><linearGradient id="vf" x1="0" y1="0" x2="0" y2="1"><stop offset="0" stop-color="#f2f2f2"/><stop offset="1" stop-color="#e2e2e2"/></linearGradient></defs><polygon points="1935,322 1976,345 2018,320 1990,300" fill="rgba(0,0,0,0.18)" filter="url(#vb)"/><polygon points="1931.8,268.1 1976.4,284.2 1975,340.6 1931.8,319.7" fill="url(#vf)" /><polygon points="1976.4,284.2 2014,268.1 2010.6,317.6 1975,340.6" fill="#e6e6e6" /><polygon points="1931.8,268.1 1970.8,255.6 2014,268.1 1976.4,284.2" fill="#f0f0f0" /><path d="M1931.8 268.1 L1970.8 255.6 L2014 268.1 L1976.4 284.2 Z M1976.4 284.2 L1975 340.6 M2014 268.1 L2010.6 317.6 L1975 340.6" stroke="#8a8a8a" stroke-width="0.9" stroke-dasharray="3 2.5" fill="none"/><text transform="matrix(0.96,0.26,0,1,1939.5,301)" font-family="Liberation Sans" font-size="10.5" fill="#7c7c7c" textLength="30">FRONT</text><text transform="matrix(0.92,-0.36,0,1,1983.5,315)" font-family="Liberation Sans" font-size="9.5" fill="#8a8a8a" textLength="22">RIGHT</text><text transform="matrix(0.9,0.3,-0.5,0.6,1968,271)" font-family="Liberation Sans" font-size="7" fill="#9a9a9a">TOP</text><line x1="1932" y1="260.4" x2="1933" y2="319.7" stroke="#5c5cff" stroke-width="3" /><line x1="1933" y1="320" x2="1982.7" y2="347.6" stroke="#f29090" stroke-width="3" /><text x="1924.5" y="256.5" font-family="Liberation Sans" font-size="16" fill="#7a7aff">Z</text><text x="1985.5" y="357.5" font-family="Liberation Sans" font-size="16" fill="#f49090">X</text></g></svg>
<div style="position:absolute;left:819.5px;top:1028.3px;width:405.3px;height:38.3px;background:#f1f1f1"></div>
<svg style="position:absolute;left:0;top:0" width="2048" height="1148" viewBox="0 0 2048 1148"><path d="M838.5 1036 Q832 1034.5 831 1047.5 Q831.5 1060 837 1059.5" fill="none" stroke="#555" stroke-width="1.5"/><path d="M838.5 1036 Q841 1036.5 841.5 1041" fill="none" stroke="#555" stroke-width="1.5"/><path d="M841.5 1054 Q841 1059 838 1059.5" fill="none" stroke="#555" stroke-width="1.5"/><path d="M827.5 1044 Q824.5 1047.5 827.5 1051" fill="none" stroke="#555" stroke-width="1.5"/><path d="M834.5 1051.5 Q848 1053 849.5 1047 Q850 1042.5 845.5 1042" fill="none" stroke="#555" stroke-width="1.5"/><path d="M837.5 1040.5 H842 M839.8 1038.3 V1042.7 M842.5 1043.6 H847 M844.8 1041.4 V1045.8" stroke="#444" stroke-width="1.3"/><path d="M834 1047 H839 M836.5 1044.5 V1049.5" stroke="#1a88e0" stroke-width="1.9"/><path d="M858.5 1044.5 H867.5 L863 1050.5 Z" fill="#333"/><rect x="878" y="1040" width="24.5" height="19" fill="#f8f8f8" stroke="#555" stroke-width="1.6"/><rect x="882.5" y="1046" width="16" height="6.5" fill="#9aa0aa" stroke="#555" stroke-width="1"/><path d="M880 1039 L884 1034 L886 1038 L893 1036 L895 1039 L900 1036 L901 1039" fill="none" stroke="#666" stroke-width="1.3"/><path d="M925 1060 Q919 1053 920 1047 L922 1046 L925 1050 V1038 Q926 1036 928 1038 V1046 V1036 Q930 1034 932 1036 V1046 V1037 Q934 1035 936 1037 V1047 V1040 Q938 1038 940 1040 V1050 Q940 1057 936 1060 Z" fill="#f4f4f4" stroke="#555" stroke-width="1.4" stroke-linejoin="round"/><circle cx="968" cy="1047" r="6.8" fill="#dff2f4" stroke="#555" stroke-width="1.6"/><path d="M973 1052 L978.5 1058" stroke="#444" stroke-width="3.4" stroke-linecap="round"/><path d="M979 1036 H985 M982 1033 V1039 M979 1042 H985" stroke="#444" stroke-width="1.4"/><circle cx="1012" cy="1046" r="9" fill="#f6f6f6" stroke="#555" stroke-width="1.8"/><rect x="1007.5" y="1041.5" width="9" height="9" fill="#f0f0f0" stroke="#555" stroke-width="1.2"/><path d="M1018.5 1052.5 L1026 1059.5" stroke="#444" stroke-width="3.6" stroke-linecap="round"/><path d="M1036.5 1044.5 H1045.5 L1041 1050.5 Z" fill="#333"/><rect x="1068.8" y="1035.8" width="24.6" height="20" rx="1.5" fill="#fafafa" stroke="#555" stroke-width="1.5"/><rect x="1072" y="1038.6" width="18.2" height="13.4" rx="1.5" fill="#a8c8ec" stroke="#2f4f8a" stroke-width="1.5"/><path d="M1076 1056 V1059.4 H1086.2 V1056" fill="#fafafa" stroke="#555" stroke-width="1.3"/><path d="M1097.5 1044.5 H1106.5 L1102 1050.5 Z" fill="#333"/><defs><linearGradient id="gg" x1="0" y1="0" x2="0" y2="1"><stop offset="0" stop-color="#ffffff"/><stop offset="1" stop-color="#c8d0e0"/></linearGradient></defs><rect x="1118.8" y="1035.5" width="24" height="24" rx="1.5" fill="#666" stroke="#555" stroke-width="1"/><rect x="1120.30" y="1037.00" width="3" height="3" fill="url(#gg)"/><rect x="1124.95" y="1037.00" width="3" height="3" fill="url(#gg)"/><rect x="1129.60" y="1037.00" width="3" height="3" fill="url(#gg)"/><rect x="1134.25" y="1037.00" width="3" height="3" fill="url(#gg)"/><rect x="1138.90" y="1037.00" width="3" height="3" fill="url(#gg)"/><rect x="1120.30" y="1041.65" width="3" height="3" fill="url(#gg)"/><rect x="1124.95" y="1041.65" width="3" height="3" fill="url(#gg)"/><rect x="1129.60" y="1041.65" width="3" height="3" fill="url(#gg)"/><rect x="1134.25" y="1041.65" width="3" height="3" fill="url(#gg)"/><rect x="1138.90" y="1041.65" width="3" height="3" fill="url(#gg)"/><rect x="1120.30" y="1046.30" width="3" height="3" fill="url(#gg)"/><rect x="1124.95" y="1046.30" width="3" height="3" fill="url(#gg)"/><rect x="1129.60" y="1046.30" width="3" height="3" fill="url(#gg)"/><rect x="1134.25" y="1046.30" width="3" height="3" fill="url(#gg)"/><rect x="1138.90" y="1046.30" width="3" height="3" fill="url(#gg)"/><rect x="1120.30" y="1050.95" width="3" height="3" fill="url(#gg)"/><rect x="1124.95" y="1050.95" width="3" height="3" fill="url(#gg)"/><rect x="1129.60" y="1050.95" width="3" height="3" fill="url(#gg)"/><rect x="1134.25" y="1050.95" width="3" height="3" fill="url(#gg)"/><rect x="1138.90" y="1050.95" width="3" height="3" fill="url(#gg)"/><rect x="1120.30" y="1055.60" width="3" height="3" fill="url(#gg)"/><rect x="1124.95" y="1055.60" width="3" height="3" fill="url(#gg)"/><rect x="1129.60" y="1055.60" width="3" height="3" fill="url(#gg)"/><rect x="1134.25" y="1055.60" width="3" height="3" fill="url(#gg)"/><rect x="1138.90" y="1055.60" width="3" height="3" fill="url(#gg)"/><path d="M1147 1044.5 H1156 L1151.5 1050.5 Z" fill="#333"/><rect x="1168.7" y="1037.7" width="10.6" height="8.8" rx="1.2" fill="#a8c4ea" stroke="#2f4f8a" stroke-width="1.4"/><rect x="1171.3" y="1040" width="5.4" height="4.2" fill="#c4d8f2" stroke="#8aa8d8" stroke-width="0.8"/><rect x="1180.7" y="1037.7" width="10.6" height="8.8" rx="1.2" fill="#a8c4ea" stroke="#2f4f8a" stroke-width="1.4"/><rect x="1183.3" y="1040" width="5.4" height="4.2" fill="#c4d8f2" stroke="#8aa8d8" stroke-width="0.8"/><rect x="1168.7" y="1047.7" width="10.6" height="8.8" rx="1.2" fill="#a8c4ea" stroke="#2f4f8a" stroke-width="1.4"/><rect x="1171.3" y="1050" width="5.4" height="4.2" fill="#c4d8f2" stroke="#8aa8d8" stroke-width="0.8"/><rect x="1180.7" y="1047.7" width="10.6" height="8.8" rx="1.2" fill="#a8c4ea" stroke="#2f4f8a" stroke-width="1.4"/><rect x="1183.3" y="1050" width="5.4" height="4.2" fill="#c4d8f2" stroke="#8aa8d8" stroke-width="0.8"/><path d="M1196.5 1044.5 H1205.5 L1201 1050.5 Z" fill="#333"/></svg>
<div style="position:absolute;left:227.5px;top:-1.2px;width:385.5px;height:724.6px;box-sizing:border-box;background:#fff;border:2px solid #949494;border-radius:4px"></div>
<div style="position:absolute;left:235.7px;top:160.3px;width:369px;height:38.5px;background:#d9d9d9"></div>
<div style="position:absolute;left:235.7px;top:80px;width:369px;height:2px;background:#969696"></div>
<div style="position:absolute;left:235.7px;top:158.4px;width:369px;height:2px;background:#969696"></div>
<div style="position:absolute;left:235.7px;top:311px;width:369px;height:2px;background:#969696"></div>
<div style="position:absolute;left:235.7px;top:348px;width:369px;height:2px;background:#969696"></div>
<div style="position:absolute;left:235.7px;top:497.5px;width:369px;height:2px;background:#969696"></div>
<div style="position:absolute;left:235.7px;top:533.7px;width:369px;height:2px;background:#969696"></div>
<div style="position:absolute;left:235.7px;top:609.5px;width:369px;height:2px;background:#969696"></div>
<div style="position:absolute;left:235.7px;top:681.8px;width:369px;height:2px;background:#969696"></div>
<div class="t" style="left:268px;top:14.91px;font-size:17px;color:#333;font-weight:400;">Move/Copy</div>
<div class="t" style="left:516.5px;top:14.91px;font-size:17px;color:#333;font-weight:400;">M</div>
<div class="t" style="left:268px;top:52.91px;font-size:17px;color:#333;font-weight:400;">Move to Group</div>
<div class="t" style="left:268px;top:92.81px;font-size:17px;color:#333;font-weight:400;">Create Components from Bodies</div>
<div class="t" style="left:268px;top:131.21px;font-size:17px;color:#333;font-weight:400;">Create Selection Set</div>
<div class="t" style="left:268px;top:171.21px;font-size:17px;color:#333;font-weight:400;">Physical Material</div>
<div class="t" style="left:268px;top:210.21px;font-size:17px;color:#333;font-weight:400;">Appearance</div>
<div class="t" style="left:516.5px;top:210.21px;font-size:17px;color:#333;font-weight:400;">A</div>
<div class="t" style="left:268px;top:248.21px;font-size:17px;color:#333;font-weight:400;">Texture Map Controls</div>
<div class="t" style="left:268px;top:285.61px;font-size:17px;color:#333;font-weight:400;">Properties</div>
<div class="t" style="left:268px;top:322.51px;font-size:17px;color:#333;font-weight:400;">Save As STL</div>
<div class="t" style="left:268px;top:359.21px;font-size:17px;color:#333;font-weight:400;">Copy</div>
<div class="t" style="left:516.5px;top:359.21px;font-size:17px;color:#333;font-weight:400;">Ctrl+C</div>
<div class="t" style="left:268px;top:394.91px;font-size:17px;color:#333;font-weight:400;">Cut</div>
<div class="t" style="left:516.5px;top:394.91px;font-size:17px;color:#333;font-weight:400;">Ctrl+X</div>
<div class="t" style="left:268px;top:432.11px;font-size:17px;color:#333;font-weight:400;">Delete</div>
<div class="t" style="left:516.5px;top:432.11px;font-size:17px;color:#333;font-weight:400;">Del</div>
<div class="t" style="left:268px;top:470.41px;font-size:17px;color:#333;font-weight:400;">Remove</div>
<div class="t" style="left:268px;top:508.71px;font-size:17px;color:#333;font-weight:400;">Display Detail Control</div>
<div class="t" style="left:268px;top:547.41px;font-size:17px;color:#333;font-weight:400;">Show/Hide</div>
<div class="t" style="left:516.5px;top:547.41px;font-size:17px;color:#333;font-weight:400;">V</div>
<div class="t" style="left:268px;top:584.21px;font-size:17px;color:#333;font-weight:400;">Selectable/Unselectable</div>
<div class="t" style="left:268px;top:621.21px;font-size:17px;color:#333;font-weight:400;">Opacity Control</div>
<div class="t" style="left:268px;top:656.51px;font-size:17px;color:#333;font-weight:400;">Isolate</div>
<div class="t" style="left:268px;top:693.41px;font-size:17px;color:#333;font-weight:400;">Find in Window</div>
<svg style="position:absolute;left:588px;top:620px;" width="10" height="17" viewBox="0 0 10 17"><path d="M0.8 0.5 L8.8 8 L0.8 15.5 Z" fill="#333"/></svg>
<svg style="position:absolute;left:236px;top:10px;" width="24" height="24" viewBox="0 0 24 24"><rect x="10.7" y="4" width="2.2" height="16" fill="#333"/><rect x="4" y="10.7" width="16" height="2.2" fill="#333"/><polygon points="11.8,0.2 16.5,5.8 7.1,5.8" fill="#333" /><polygon points="11.8,23.4 16.5,17.8 7.1,17.8" fill="#333" /><polygon points="0.2,11.8 5.8,7.1 5.8,16.5" fill="#333" /><polygon points="23.4,11.8 17.8,7.1 17.8,16.5" fill="#333" /></svg>
<svg style="position:absolute;left:236px;top:49px;" width="27" height="26" viewBox="0 0 27 26"><rect x="0.8" y="0.8" width="6.5" height="6.5" fill="#f5d0a0" stroke="#d86a20" stroke-width="1.5"/><path d="M9 3.5 H14.5 V8" fill="none" stroke="#333" stroke-width="1.2"/><path d="M12.3 7 L14.5 10 L16.7 7 Z" fill="#333"/><path d="M3.5 24 V11.5 H10 L12 13.5 H18.5 V16" fill="#ddd" stroke="#333" stroke-width="1.3"/><path d="M3.5 24 L7 16 H25 L21 24 Z" fill="#f2f2f2" stroke="#333" stroke-width="1.3" stroke-linejoin="round"/><path d="M5 23 L8 17.5 H23" fill="none" stroke="#9ab" stroke-width="1"/></svg>
<svg style="position:absolute;left:236px;top:89px;" width="26" height="26" viewBox="0 0 26 26"><rect x="0.8" y="12.5" width="10" height="11" fill="#dcdcdc" stroke="#555" stroke-width="1.3"/><path d="M10.8 12.5 L13.5 10 H23 V21 L20.5 23.5 H10.8 Z" fill="#dcdcdc" stroke="#555" stroke-width="1.3" stroke-linejoin="round"/><path d="M10.8 12.5 H20.5 V23.5 M20.5 12.5 L23 10" fill="none" stroke="#555" stroke-width="1"/><rect x="0.8" y="3" width="10" height="9.5" fill="#5aa8e8"/><path d="M0.8 3 L3 0.8 H13 L10.8 3 Z" fill="#8ccbf7"/><path d="M10.8 3 L13 0.8 V10.5 L10.8 12.5 Z" fill="#3a88c8"/><polygon points="19.5,0.0 20.49,3.8 23.88,1.82 21.9,5.21 25.7,6.2 21.9,7.19 23.88,10.58 20.49,8.6 19.5,12.4 18.51,8.6 15.12,10.58 17.1,7.19 13.3,6.2 17.1,5.21 15.12,1.82 18.51,3.8" fill="#f5a300" /></svg>
<svg style="position:absolute;left:236px;top:126px;" width="26" height="27" viewBox="0 0 26 27"><path d="M1 22 V8 H14" fill="none" stroke="#1a7a1a" stroke-width="1.6"/><rect x="5.5" y="11.5" width="16" height="13" rx="1.5" fill="#79b85a" stroke="#1a7a1a" stroke-width="1.6"/><polygon points="19.7,0.2 20.85,3.43 23.94,1.96 22.47,5.05 25.7,6.2 22.47,7.35 23.94,10.44 20.85,8.97 19.7,12.2 18.55,8.97 15.46,10.44 16.93,7.35 13.7,6.2 16.93,5.05 15.46,1.96 18.55,3.43" fill="#e83a10" /><circle cx="19.7" cy="6.2" r="2.6" fill="#ffd040"/></svg>
<svg style="position:absolute;left:236px;top:167px;" width="26" height="26" viewBox="0 0 26 26"><defs><clipPath id="pc"><circle cx="12.6" cy="12.6" r="12"/></clipPath></defs><g clip-path="url(#pc)"><rect width="26" height="26" fill="#fafafa"/><rect x="-4.55" y="-4.55" width="4.9" height="4.9" fill="#555"/><rect x="5.25" y="-4.55" width="4.9" height="4.9" fill="#555"/><rect x="15.05" y="-4.55" width="4.9" height="4.9" fill="#555"/><rect x="24.85" y="-4.55" width="4.9" height="4.9" fill="#555"/><rect x="0.35" y="0.35" width="4.9" height="4.9" fill="#555"/><rect x="10.15" y="0.35" width="4.9" height="4.9" fill="#555"/><rect x="19.95" y="0.35" width="4.9" height="4.9" fill="#555"/><rect x="-4.55" y="5.25" width="4.9" height="4.9" fill="#555"/><rect x="5.25" y="5.25" width="4.9" height="4.9" fill="#555"/><rect x="15.05" y="5.25" width="4.9" height="4.9" fill="#555"/><rect x="24.85" y="5.25" width="4.9" height="4.9" fill="#555"/><rect x="0.35" y="10.15" width="4.9" height="4.9" fill="#555"/><rect x="10.15" y="10.15" width="4.9" height="4.9" fill="#555"/><rect x="19.95" y="10.15" width="4.9" height="4.9" fill="#555"/><rect x="-4.55" y="15.05" width="4.9" height="4.9" fill="#555"/><rect x="5.25" y="15.05" width="4.9" height="4.9" fill="#555"/><rect x="15.05" y="15.05" width="4.9" height="4.9" fill="#555"/><rect x="24.85" y="15.05" width="4.9" height="4.9" fill="#555"/><rect x="0.35" y="19.95" width="4.9" height="4.9" fill="#555"/><rect x="10.15" y="19.95" width="4.9" height="4.9" fill="#555"/><rect x="19.95" y="19.95" width="4.9" height="4.9" fill="#555"/><rect x="-4.55" y="24.85" width="4.9" height="4.9" fill="#555"/><rect x="5.25" y="24.85" width="4.9" height="4.9" fill="#555"/><rect x="15.05" y="24.85" width="4.9" height="4.9" fill="#555"/><rect x="24.85" y="24.85" width="4.9" height="4.9" fill="#555"/></g><circle cx="12.6" cy="12.6" r="11.2" fill="none" stroke="#5a5a5a" stroke-width="1.7" opacity="0.85"/></svg>
<svg style="position:absolute;left:237px;top:206.5px;" width="23" height="23" viewBox="0 0 23 23"><path d="M11.5 11.5 L5.75 1.54 A11.5 11.5 0 0 1 17.25 1.54 Z" fill="#f5a623"/><path d="M11.5 11.5 L17.25 1.54 A11.5 11.5 0 0 1 23.00 11.50 Z" fill="#f07a2a"/><path d="M11.5 11.5 L23.00 11.50 A11.5 11.5 0 0 1 17.25 21.46 Z" fill="#e84848"/><path d="M11.5 11.5 L17.25 21.46 A11.5 11.5 0 0 1 5.75 21.46 Z" fill="#8a4ae8"/><path d="M11.5 11.5 L5.75 21.46 A11.5 11.5 0 0 1 0.00 11.50 Z" fill="#20b8c8"/><path d="M11.5 11.5 L0.00 11.50 A11.5 11.5 0 0 1 5.75 1.54 Z" fill="#40b868"/></svg>
<svg style="position:absolute;left:237px;top:244px;" width="22" height="27" viewBox="0 0 22 27"><path d="M11.5 7.5 L2.5 13.5 L8 18.5 L11.5 15.5 Z" fill="#e4e4e4"/><path d="M9.5 7 L2.5 13.5 L9.5 19.5" fill="none" stroke="#707070" stroke-width="2.2" stroke-linejoin="round"/><path d="M13.5 8.5 L20.7 1.5 V19.5 L13.5 25 Z" fill="#62a8e0"/></svg>
<svg style="position:absolute;left:239px;top:430px;" width="19" height="19" viewBox="0 0 19 19"><path d="M2.5 2.5 L16.5 16.5 M16.5 2.5 L2.5 16.5" stroke="#f02020" stroke-width="4"/></svg>
<svg style="position:absolute;left:236px;top:471px;" width="25" height="16" viewBox="0 0 25 16"><circle cx="17.5" cy="7.5" r="6" fill="#a8c4ec" stroke="#4a6ab8" stroke-width="1.5"/><path d="M0.5 7.5 L6 2.5 V5.8 H11.5 V9.2 H6 V12.5 Z" fill="#111"/></svg>
<svg style="position:absolute;left:236px;top:547px;" width="26" height="17" viewBox="0 0 26 17"><path d="M0.5 8.5 C6.5 -1.8 19.5 -1.8 25.5 8.5 C19.5 18.8 6.5 18.8 0.5 8.5 Z" fill="#9a9a9a"/><circle cx="13" cy="8.5" r="5.1" fill="#fff"/><circle cx="13" cy="8.5" r="3.1" fill="#9a9a9a"/></svg>
</body></html>
